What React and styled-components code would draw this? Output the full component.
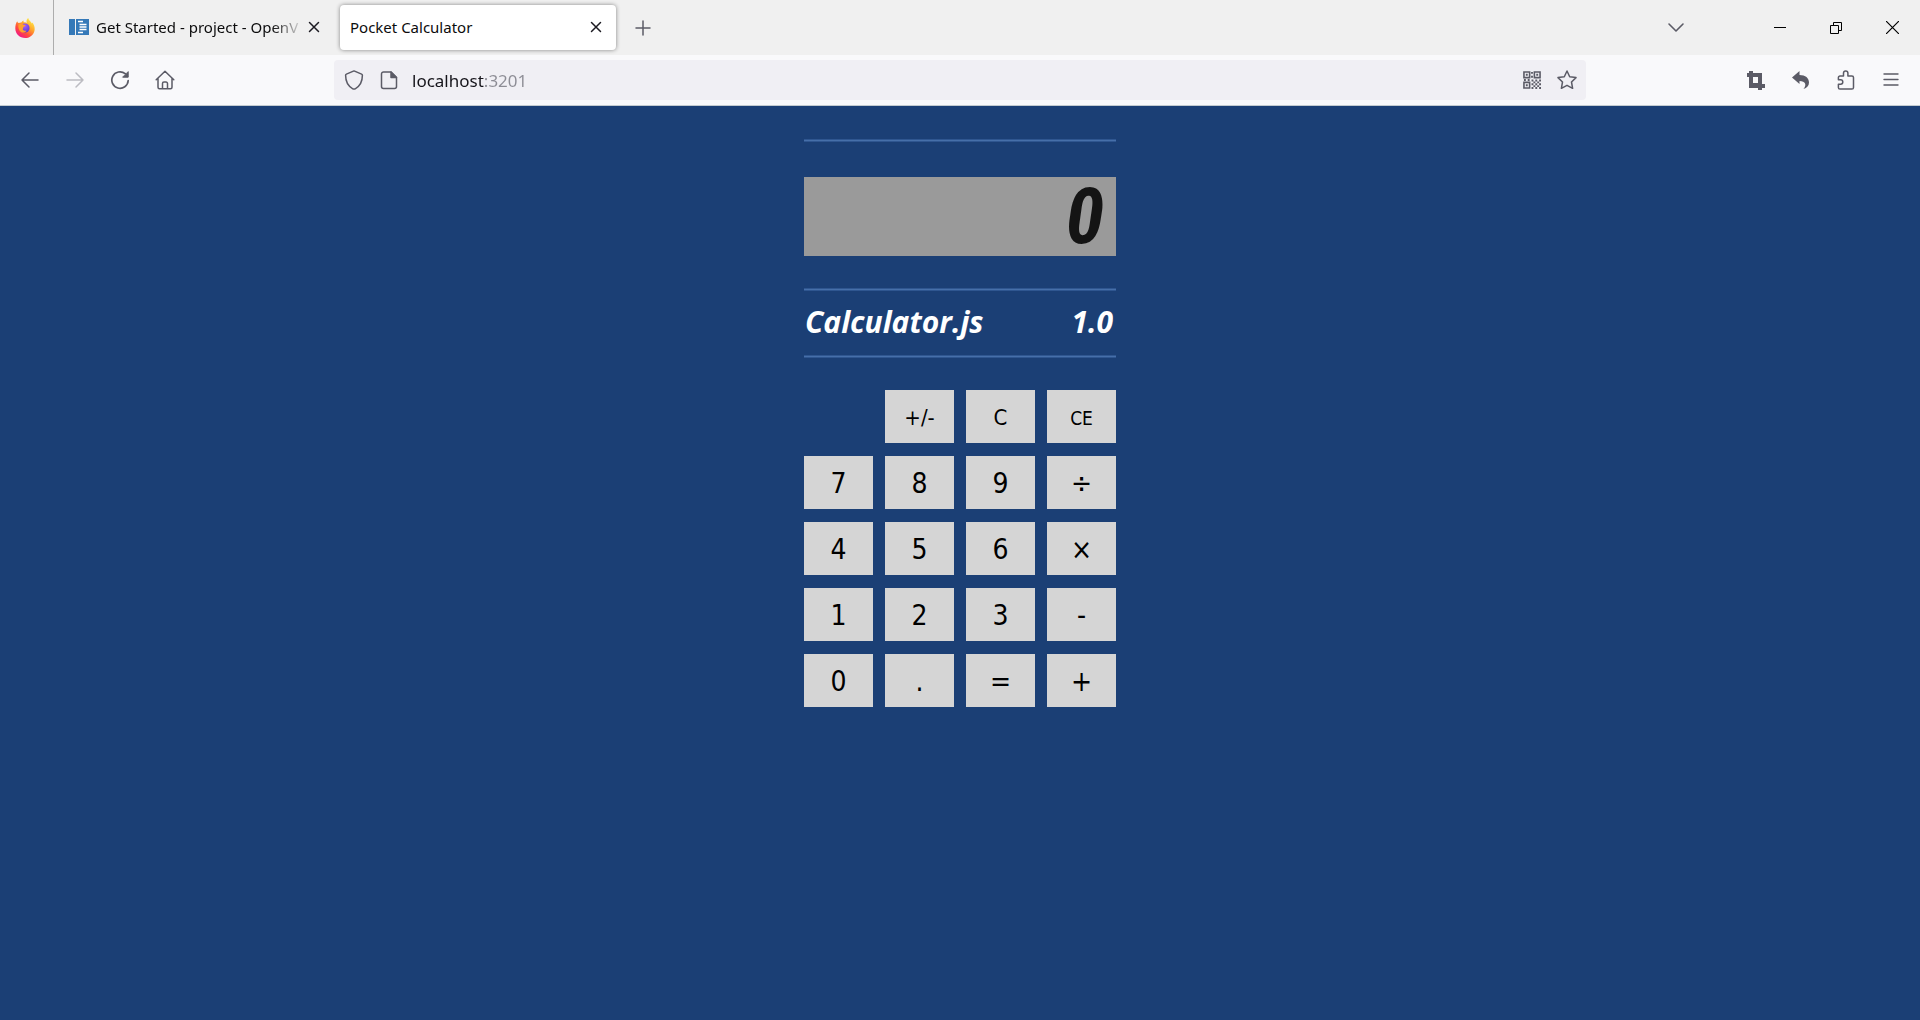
import React, { useState } from "react";
import styled, { createGlobalStyle, css } from "styled-components";

const GlobalStyle = createGlobalStyle`
  *, *::before, *::after { box-sizing: border-box; }
  html, body { margin: 0; }
  body {
    background: #1b3f75;
    font-family: "Noto Sans", "Open Sans", sans-serif;
  }
  button, input { font: inherit; color: inherit; }
  svg { display: block; flex: none; }
`;

const Page = styled.div`
  display: flex;
  flex-direction: column;
  min-height: 100vh;
`;

const TabStrip = styled.header`
  display: flex;
  align-items: center;
  height: 55px;
  background: #f0f0f0;
  color: #0c0c0d;
`;

const PinnedTab = styled.button`
  display: flex;
  align-items: center;
  align-self: stretch;
  width: 54px;
  padding: 0 0 0 14px;
  border: 0;
  border-right: 1px solid #adadad;
  background: none;
`;

const Tab = styled.div`
  display: flex;
  align-items: center;
  width: 276px;
  height: 45px;
  padding: 0 6px 2px 15px;
  margin-right: 10px;
  border-radius: 4px;
  ${(p) =>
    p.$active &&
    css`
      padding: 0 10px 2px;
      background: #fff;
      box-shadow: 0 0 4px rgba(0, 0, 0, 0.45);
    `}
`;

const TabLabel = styled.button`
  display: flex;
  align-items: center;
  flex: 1;
  gap: 6px;
  min-width: 0;
  padding: 0;
  border: 0;
  background: none;
  text-align: left;
`;

const TabTitle = styled.span`
  flex: 1;
  overflow: hidden;
  font-size: 15px;
  line-height: 24px;
  white-space: nowrap;
  ${(p) => p.$fade && css`mask-image: linear-gradient(to left, transparent, #000 32px);`}
`;

const IconButton = styled.button`
  display: flex;
  align-items: center;
  justify-content: center;
  flex: none;
  width: ${(p) => p.$width || 20}px;
  height: 24px;
  padding: 0;
  border: 0;
  background: none;
  color: ${(p) => p.$color || "#5b5b66"};
`;

const WindowControls = styled.div`
  display: flex;
  margin-left: auto;
`;

const Toolbar = styled.nav`
  display: grid;
  grid-template-columns: 1fr minmax(0, 1252px) 1fr;
  align-items: center;
  height: 51px;
  border-bottom: 1px solid #c3cbd0;
  background: #f9f9fb;
`;

const ToolGroup = styled.div`
  display: flex;
  justify-content: ${(p) => (p.$end ? "flex-end" : "flex-start")};
  padding: 0 7px;
`;

const AddressBar = styled.form`
  display: flex;
  align-items: center;
  gap: 11px;
  height: 40px;
  padding: 0 7px 0 8px;
  border-radius: 4px;
  background: #f0eff4;
`;

const AddressInput = styled.input`
  flex: 1;
  min-width: 0;
  height: 28px;
  padding: 0;
  border: 0;
  outline: 0;
  font-size: 17px;
  background: linear-gradient(to right, #15141a 72px, #8c8c94 72px);
  background-clip: text;
  -webkit-background-clip: text;
  -webkit-text-fill-color: transparent;
`;

const Calculator = styled.main`
  display: flex;
  flex-direction: column;
  width: 312px;
  margin: 33px auto;
`;

const Rule = styled.hr`
  width: 100%;
  height: 3px;
  margin: 0;
  border: 0;
  background: linear-gradient(#2f5690 1px, #466fa9 1px, #466fa9 2px, #2f5690 2px);
`;

const Display = styled.output`
  display: flex;
  align-items: center;
  justify-content: flex-end;
  height: 79px;
  margin: 35px 0 32px;
  padding: 0 12px;
  background: #9a9a9a;
  color: #141414;
  font-family: "Roboto Condensed", "Liberation Sans Narrow", "Liberation Sans", sans-serif;
  font-size: 78px;
  font-style: italic;
  font-weight: bold;
  line-height: 79px;
`;

const Brand = styled.h1`
  display: flex;
  justify-content: space-between;
  margin: 0;
  padding: 0 3px 2px 1px;
  color: #fff;
  font-family: "Open Sans", "Noto Sans", sans-serif;
  font-size: 30px;
  font-style: italic;
  font-weight: bold;
  line-height: 62px;
`;

const Keypad = styled.div`
  display: grid;
  grid-template-columns: repeat(4, 1fr);
  grid-auto-rows: 53px;
  gap: 13px 12px;
  margin-top: 32px;
`;

const keySizes = { large: 28, medium: 22, small: 19 };

const Key = styled.button`
  padding: 3px 0 0;
  border: 0;
  background: #d5d5d5;
  color: #000;
  font-family: "DejaVu Sans Condensed", "DejaVu Sans", sans-serif;
  font-size: ${(p) => keySizes[p.$size]}px;
  line-height: 50px;
  &:first-child { grid-column: 2; }
  &:active { background: #bbb; }
`;

const Line = ({ size = 20, width = 1.5, children }) => (
  <svg width={size} height={size} viewBox="0 0 20 20" fill="none" stroke="currentColor"
    strokeWidth={width} strokeLinecap="round" strokeLinejoin="round" aria-hidden="true">
    {children}
  </svg>
);

const Cross = () => <Line><path d="M5.500 5.500l9 9M14.500 5.500l-9 9" /></Line>;

const Firefox = () => (
  <svg width="22" height="22" viewBox="0 0 22 22" aria-hidden="true">
    <defs>
      <linearGradient id="flame" x1="0.85" y1="0.05" x2="0.2" y2="0.95">
        <stop offset="0" stopColor="#fff24a" />
        <stop offset="0.4" stopColor="#ffa32b" />
        <stop offset="0.7" stopColor="#ff4b3e" />
        <stop offset="1" stopColor="#f0148c" />
      </linearGradient>
      <radialGradient id="globe" cx="0.5" cy="0.3" r="0.7">
        <stop offset="0" stopColor="#a45cff" />
        <stop offset="1" stopColor="#5a3ad0" />
      </radialGradient>
    </defs>
    <path fill="url(#flame)" d="M3.2 4.2c.4 1 .8 1.5 1.5 1.9C5.6 5.5 6.5 5.300 7.300 5.400 7.800 4.500 8.700 3.800 9.700 3.500 9.400 4.200 9.400 4.800 9.800 5.300c1 0 2 .1 3 .6C12 3.800 13 1.800 14.300 1c.2 1.700 1.300 2.600 2.600 3.900.4.400.7 1 .9 1.600l.5-.9c1.400 1.600 2.500 3.900 2.400 6.600C20.500 17.300 16.300 21 11.200 21 5.700 21 1.400 16.900 1.300 11.500 1.300 8.500 1.800 6 3.200 4.200z" />
    <circle cx="11" cy="11" r="4.600" fill="url(#globe)" />
    <path fill="#ffa02e" d="M4.500 7.500c2-1.200 3.700-.9 5 .2.900 0 2 .1 2 .8-.2.700-1.500 1-2 1.500-.4.800-.1 1.600-.9 2 .600 1.600 2.300 2.200 4 1.700-1 1.800-3.700 2.400-5.700 1.200C4.700 13.600 4 10.300 4.500 7.500z" />
  </svg>
);

const BookFavicon = () => (
  <svg width="21" height="18" viewBox="0 0 21 18" aria-hidden="true">
    <path fill="#3579b8" d="M0 1h6v16H0zM7 1h13v16H7z" />
    <path stroke="#fff" strokeWidth="1.300" d="M9 3.500h5M10.500 6.500h7M10.500 9h7M10.500 11.500h7M9 14.500h5" />
  </svg>
);

const QrCode = () => {
  const dots = [];
  for (let y = 0; y < 5; y++)
    for (let x = 0; x < 5; x++) if ((x + y) % 2 === 0) dots.push(`M${9 + x * 2} ${9 + y * 2}h2v2h-2z`);
  return (
    <svg width="18" height="18" viewBox="0 0 19 19" aria-hidden="true">
      <g fill="none" stroke="#5b5b66" strokeWidth="1.700">
        <path d="M1 1h6v6H1zM12 1h6v6h-6zM1 12h6v6H1z" />
      </g>
      <path fill="#5b5b66" d={`M3 3h2v2H3zM14 3h2v2h-2zM3 14h2v2H3zM8.500 1h2v2h-2zM8.500 5h2v2h-2zM1 8.500h2v2H1zM5 8.500h2v2H5z${dots.join("")}`} />
    </svg>
  );
};

const KEYS = [
  ["+/-", "medium"], ["C", "medium"], ["CE", "small"],
  ["7"], ["8"], ["9"], ["÷"],
  ["4"], ["5"], ["6"], ["×"],
  ["1"], ["2"], ["3"], ["-"],
  ["0"], ["."], ["="], ["+"],
];

const compute = (a, op, b) =>
  op === "+" ? a + b : op === "-" ? a - b : op === "×" ? a * b : op === "÷" ? a / b : b;

const initial = { shown: "0", stored: 0, op: null, fresh: true };

function press(state, key) {
  if (key === "C") return initial;
  if (key === "CE") return { ...state, shown: "0", fresh: true };
  if (key === "+/-") return { ...state, shown: String(-Number(state.shown)) };
  if (/[0-9.]/.test(key)) {
    if (state.fresh) return { ...state, shown: key === "." ? "0." : key, fresh: false };
    if (key === "." && state.shown.includes(".")) return state;
    return state.shown.length < 8 ? { ...state, shown: state.shown + key } : state;
  }
  const result = compute(state.stored, state.op, Number(state.shown));
  return { shown: String(result).slice(0, 8), stored: result, op: key === "=" ? null : key, fresh: true };
}

export default function App() {
  const [state, setState] = useState(initial);

  return (
    <Page>
      <GlobalStyle />
      <TabStrip>
        <PinnedTab aria-label="Firefox"><Firefox /></PinnedTab>
        <Tab>
          <TabLabel>
            <BookFavicon />
            <TabTitle $fade>Get Started - project - OpenV</TabTitle>
          </TabLabel>
          <IconButton aria-label="Close tab" $color="#1c1b22"><Cross /></IconButton>
        </Tab>
        <Tab $active>
          <TabLabel><TabTitle>Pocket Calculator</TabTitle></TabLabel>
          <IconButton aria-label="Close tab" $color="#1c1b22"><Cross /></IconButton>
        </Tab>
        <IconButton aria-label="New tab" $width={34}>
          <Line><path d="M10 3v14M3 10h14" /></Line>
        </IconButton>
        <WindowControls>
          <IconButton aria-label="List all tabs" $width={152}>
            <Line width={1.6}><path d="M3 6l7 7 7-7" /></Line>
          </IconButton>
          <IconButton aria-label="Minimize" $width={56} $color="#000">
            <svg width="12" height="12" viewBox="0 0 12 12" aria-hidden="true"><path d="M0 5h12v1H0z" /></svg>
          </IconButton>
          <IconButton aria-label="Restore" $width={56} $color="#000">
            <svg width="12" height="12" viewBox="0 0 12 12" fill="none" stroke="currentColor" aria-hidden="true">
              <path d="M.5 3.500h8v8h-8zM3.500 3.500v-3h8v8h-3" />
            </svg>
          </IconButton>
          <IconButton aria-label="Close window" $width={56} $color="#000">
            <svg width="13" height="13" viewBox="0 0 13 13" fill="none" stroke="currentColor" strokeWidth="1.200" aria-hidden="true">
              <path d="M0 0l13 13M13 0L0 13" />
            </svg>
          </IconButton>
        </WindowControls>
      </TabStrip>

      <Toolbar>
        <ToolGroup>
          <IconButton aria-label="Back" $width={45}><Line><path d="M18 10H2M9 3l-7 7 7 7" /></Line></IconButton>
          <IconButton aria-label="Forward" $width={45} $color="#bcbcc2" disabled><Line><path d="M2 10h16M11 3l7 7-7 7" /></Line></IconButton>
          <IconButton aria-label="Reload" $width={45}>
            <Line width={1.700}>
              <path d="M18.200 10.500a8.200 8.200 0 1 1-3-6.800" />
              <path d="M18.200 2v5.200H13z" fill="currentColor" strokeWidth="1" />
            </Line>
          </IconButton>
          <IconButton aria-label="Home" $width={45}>
            <Line><path d="M1.200 9.700L10 1.200l8.800 8.500M3 8.500v8.800a1.500 1.500 0 0 0 1.500 1.500h11a1.500 1.500 0 0 0 1.500-1.500V8.500M7.500 18.500v-5a1.500 1.500 0 0 1 1.500-1.500h2a1.500 1.500 0 0 1 1.500 1.500v5" /></Line>
          </IconButton>
        </ToolGroup>
        <AddressBar onSubmit={(e) => e.preventDefault()}>
          <IconButton type="button" aria-label="Tracking protection" $width={24}>
            <Line><path d="M10 .9l7.600 3.200c.5.200.8.600.8 1.200 0 5.700-2 10.700-7.200 13.500-.8.400-1.600.4-2.400 0C3.600 16 1.600 11 1.600 5.300c0-.6.3-1 .8-1.200z" /></Line>
          </IconButton>
          <IconButton type="button" aria-label="Site information" $width={24}>
            <Line>
              <path d="M12 2H4.500A2 2 0 0 0 2.500 4v12.500a2 2 0 0 0 2 2h11a2 2 0 0 0 2-2V7.500z" />
              <path d="M12 2v5.500h5.500z" fill="currentColor" />
            </Line>
          </IconButton>
          <AddressInput aria-label="Address" defaultValue="localhost:3201" spellCheck={false} />
          <IconButton type="button" aria-label="QR code" $width={24}><QrCode /></IconButton>
          <IconButton type="button" aria-label="Bookmark" $width={24}>
            <Line><path d="M10 1l2.700 5.700 6.300.9-4.500 4.400 1.100 6.300L10 15.300l-5.600 3 1.100-6.300L1 7.600l6.300-.9z" /></Line>
          </IconButton>
        </AddressBar>
        <ToolGroup $end>
          <IconButton aria-label="Screenshot" $width={45}>
            <svg width="20" height="20" viewBox="0 0 20 20" aria-hidden="true">
              <path fill="#5b5b66" fillRule="evenodd" d="M3 1h4v2h9v11h3v4h-3v2h-4v-2H3V7H1V3h2zM7 7v6h5V7z" />
            </svg>
          </IconButton>
          <IconButton aria-label="Undo" $width={45}>
            <svg width="20" height="20" viewBox="0 0 20 20" aria-hidden="true">
              <path fill="#5b5b66" d="M1 7.500L8.500 1v4c6 0 9.500 3 9.500 7.500 0 3-2 5.500-5.500 6.500 3.500-4 2-8-4-8v3z" />
            </svg>
          </IconButton>
          <IconButton aria-label="Extensions" $width={45}>
            <Line><path d="M7.500 6V3.200a2.200 2.200 0 0 1 4.400 0V6h4a1.600 1.600 0 0 1 1.600 1.600v9.800a1.600 1.600 0 0 1-1.600 1.600H4a1.600 1.600 0 0 1-1.600-1.600v-3.200h2.200a2.200 2.200 0 0 0 0-4.400H2.400V7.600A1.600 1.600 0 0 1 4 6z" /></Line>
          </IconButton>
          <IconButton aria-label="Menu" $width={45}>
            <Line width={1.400}><path d="M3 4h14M3 9.500h14M3 15h14" /></Line>
          </IconButton>
        </ToolGroup>
      </Toolbar>

      <Calculator>
        <Rule />
        <Display aria-label="Result">{state.shown}</Display>
        <Rule />
        <Brand><span>Calculator.js</span><span>1.0</span></Brand>
        <Rule />
        <Keypad>
          {KEYS.map(([label, size = "large"]) => (
            <Key key={label} $size={size} onClick={() => setState((s) => press(s, label))}>{label}</Key>
          ))}
        </Keypad>
      </Calculator>
    </Page>
  );
}
